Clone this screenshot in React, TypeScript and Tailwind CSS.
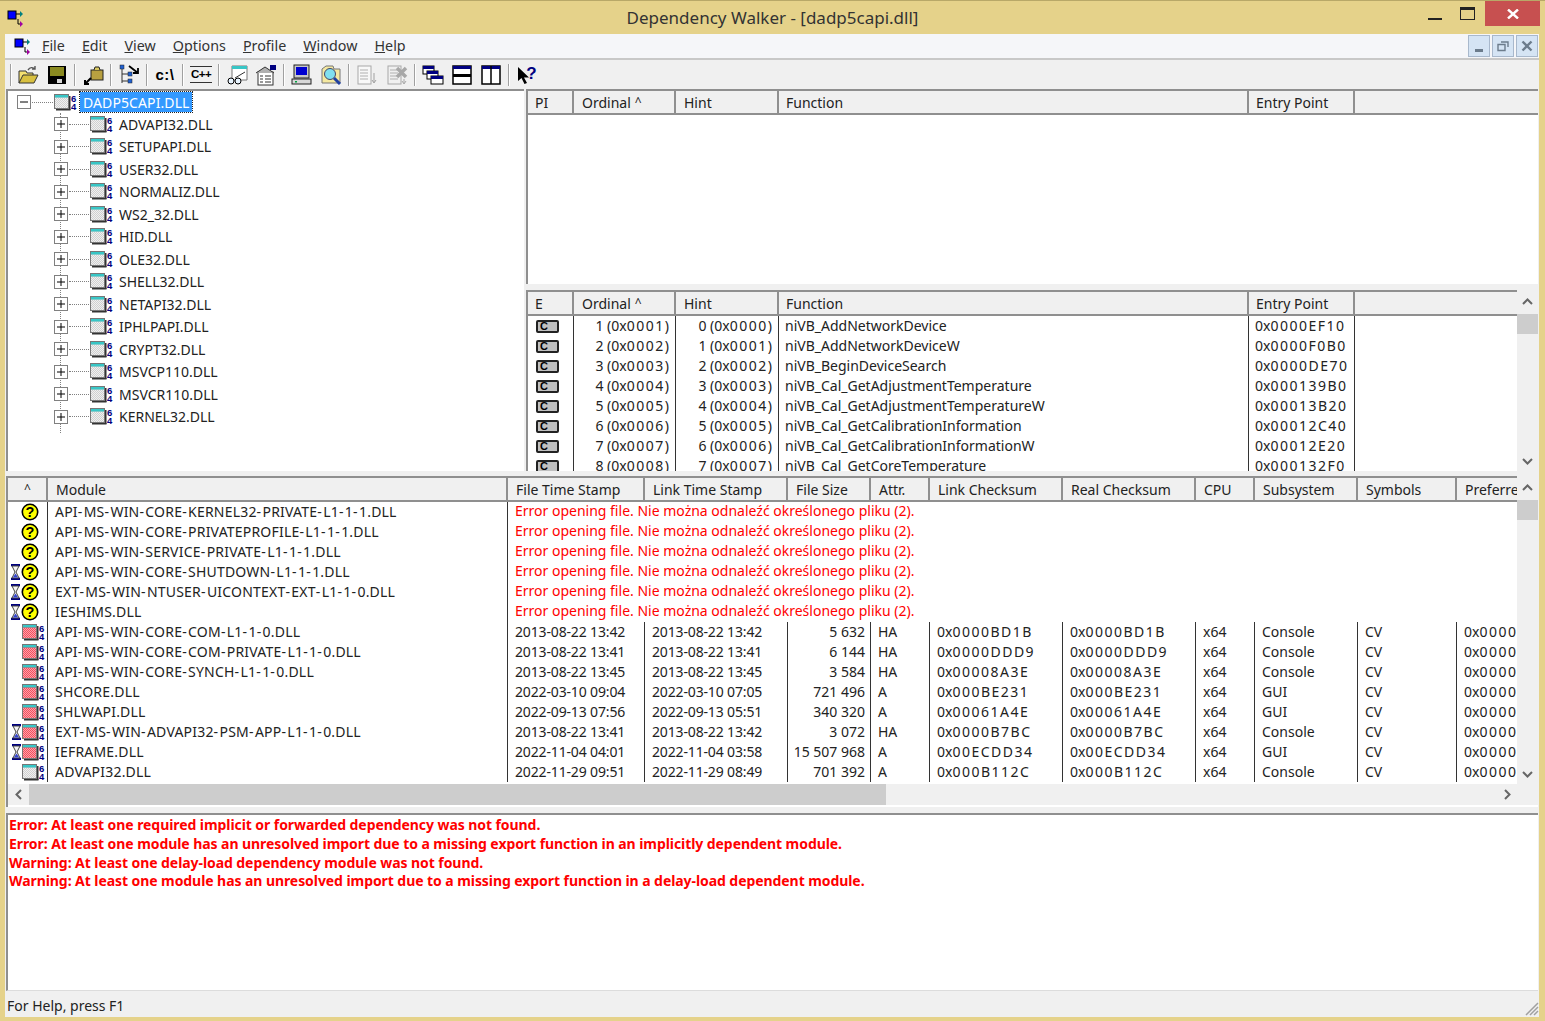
const FONT = "font-['Noto_Sans',sans-serif]";

function Hex({ v }: { v: string }) {
  return (
    <span>
      0x<span className="tracking-[1.5px]">{v}</span>
    </span>
  );
}

// the hyphens in the reference font run wider than in Noto Sans
function Name({ n }: { n: string }) {
  const parts = n.split('-');
  return (
    <span className="tracking-[0.2px]">
      {parts.map((p, i) => (
        <span key={i}>
          {p}
          {i < parts.length - 1 && <span className="tracking-[1.4px]">-</span>}
        </span>
      ))}
    </span>
  );
}

// dither dots for the module icon body
let DOTS = '';
for (let y = 4; y < 14; y++) {
  for (let x = 1 + (y % 2); x < 14; x += 2) {
    DOTS += `M${x} ${y}h1v1h-1z`;
  }
}

function DllIcon({ red }: { red?: boolean }) {
  return (
    <svg width="23" height="17" viewBox="0 0 23 17" className="shrink-0">
      <rect x="0.5" y="0.5" width="14" height="14" fill={red ? '#f2505e' : '#d0d0d0'} stroke="#777" />
      <path d={DOTS} fill={red ? '#ffa0a8' : '#f0f0f0'} />
      <rect x="15" y="2" width="1.5" height="14" fill="#333" />
      <rect x="2" y="15" width="14.5" height="1.5" fill="#333" />
      <rect x="1" y="1" width="13" height="2.5" fill="#38c6c6" />
      <text x="17" y="7.5" fontSize="9.5" fontWeight="700" fill="#000080" fontFamily="Liberation Sans">6</text>
      <text x="17" y="15.5" fontSize="9.5" fontWeight="700" fill="#000080" fontFamily="Liberation Sans">4</text>
    </svg>
  );
}

function Question() {
  return (
    <svg width="18" height="18" viewBox="0 0 18 18" className="shrink-0">
      <circle cx="9" cy="9" r="7.7" fill="#ffff00" stroke="#000" strokeWidth="1.6" />
      <text x="9" y="14" textAnchor="middle" fontSize="14.5" fontWeight="700" fontFamily="Liberation Sans" fill="#000">?</text>
    </svg>
  );
}

function Hourglass() {
  return (
    <svg width="11" height="16" viewBox="0 0 11 16" className="shrink-0">
      <path d="M1 1.2h9M1 14.8h9" stroke="#000080" strokeWidth="2.2" />
      <path d="M2 2 L9 2 L6 8 L9 14 L2 14 L5 8 Z" fill="#f4f4f4" stroke="#444" />
      <path d="M2.8 13.5 L8.2 13.5 L5.5 9.5 Z" fill="#3344cc" />
    </svg>
  );
}

function Expander({ minus }: { minus?: boolean }) {
  return (
    <svg width="14" height="14" viewBox="0 0 14 14" className="shrink-0">
      <rect x="0.5" y="0.5" width="13" height="13" fill="#fff" stroke="#808080" />
      <path d="M3 7h8" stroke="#000" />
      {!minus && <path d="M7 3v8" stroke="#000" />}
    </svg>
  );
}

function Tb({ children }: { children: React.ReactNode }) {
  return (
    <svg width="22" height="22" viewBox="0 0 22 22" className="shrink-0">
      {children}
    </svg>
  );
}

function Sep() {
  return <div className="h-[22px] w-[2px] mx-[6px] shrink-0 border-l border-[#a0a0a0] border-r border-r-white" />;
}

function AppLogo() {
  return (
    <svg width="18" height="18" viewBox="0 0 18 18" className="shrink-0">
      <rect x="1" y="2" width="8" height="8" fill="#0000ff" stroke="#000" />
      <path d="M9 5h5M11 10v5h3" stroke="#000" fill="none" />
      <path d="M13 2l3 3-3 3z" fill="#008080" />
      <path d="M13 12l3 3-3 3z" fill="#a000a0" />
    </svg>
  );
}

const TOOLBAR = (
  <div className="h-[29px] bg-[#f0f0f0] flex items-center pl-[5px] shrink-0">
    <div className="h-[22px] w-[2px] mr-[5px] border-l border-[#a0a0a0] border-r border-r-white" />
    <Tb>
      <path d="M2 19V7h7l1 2h6v3" fill="#f4e070" stroke="#333" />
      <path d="M2 19l4-8h15l-4 8z" fill="#d8c040" stroke="#333" />
      <path d="M11 6c2-3 5-3 7-1M18 2v3h-3" stroke="#555" fill="none" strokeWidth="1.4" />
    </Tb>
    <div className="w-[7px]" />
    <Tb>
      <rect x="2" y="2" width="18" height="18" fill="#000" />
      <rect x="4" y="3" width="14" height="9" fill="#8a8a20" />
      <rect x="6" y="14" width="11" height="6" fill="#000" />
      <rect x="11" y="15" width="5" height="4" fill="#d8d8d8" />
    </Tb>
    <Sep />
    <Tb>
      <rect x="9" y="6" width="12" height="10" fill="#b8a040" stroke="#222" />
      <path d="M12 6l1-3h4l1 3" fill="#d8c860" stroke="#222" />
      <path d="M9 14l-6 6M3 16v4h4" stroke="#000" strokeWidth="2" fill="none" />
    </Tb>
    <Sep />
    <Tb>
      <path d="M4 3v16M4 10h7M4 17h7" stroke="#333" fill="none" />
      <rect x="2" y="1" width="4" height="4" fill="#2060d0" stroke="#222" strokeWidth="0.5" />
      <rect x="10" y="8" width="4" height="4" fill="#2060d0" stroke="#222" strokeWidth="0.5" />
      <rect x="10" y="15" width="4" height="4" fill="#2060d0" stroke="#222" strokeWidth="0.5" />
      <path d="M11 2l9 7M20 4v5h-5" stroke="#000" strokeWidth="1.8" fill="none" />
    </Tb>
    <Sep />
    <span className="w-[22px] text-center text-[15px] font-bold text-black font-['Liberation_Sans',sans-serif] leading-none tracking-[0.5px]">c:\</span>
    <Sep />
    <div className="w-[22px] h-[17px] flex items-center justify-center border-y border-[#333]">
      <span className="text-[11.5px] font-bold leading-none text-black font-['Liberation_Sans',sans-serif] tracking-[-0.5px]">C++</span>
    </div>
    <Sep />
    <Tb>
      <path d="M6 2h15v14H6z" fill="#fff" stroke="#777" />
      <path d="M6 2h15v3H6z" fill="#38c6c6" />
      <path d="M9 14l10-6" stroke="#333" />
      <circle cx="5" cy="17" r="3" fill="#e8f4ff" stroke="#000" />
      <circle cx="12" cy="17" r="3" fill="#e8f4ff" stroke="#000" />
    </Tb>
    <div className="w-[7px]" />
    <Tb>
      <rect x="3" y="8" width="15" height="13" fill="#fff" stroke="#333" />
      <path d="M1 9l9-6 9 6" fill="#b0b0b0" stroke="#333" />
      <path d="M5 12h3M10 12h6M5 15h3M10 15h6M5 18h3M10 18h6" stroke="#333" />
      <path d="M15 1h6v5h-6z" fill="#000080" />
    </Tb>
    <Sep />
    <Tb>
      <rect x="3" y="1" width="15" height="13" fill="#c8c8c8" stroke="#222" />
      <rect x="5" y="3" width="11" height="8" fill="#0000d0" />
      <rect x="1" y="15" width="19" height="5" fill="#d8d8d8" stroke="#222" />
      <rect x="4" y="17" width="2" height="1.5" fill="#00a040" />
    </Tb>
    <div className="w-[7px]" />
    <Tb>
      <path d="M2 5l4-3h7l1 3h6v14H2z" fill="#f4e8a0" stroke="#777" />
      <circle cx="10" cy="10" r="5.5" fill="#80e0f0" stroke="#446" />
      <path d="M14 14l6 6" stroke="#2040a0" strokeWidth="3" />
    </Tb>
    <Sep />
    <Tb>
      <rect x="2" y="2" width="13" height="18" fill="#f8f8f8" stroke="#a8a8a8" />
      <path d="M4 6h8M4 9h8M4 12h8M4 15h8" stroke="#b0b0b0" />
      <path d="M18 9v9M16 16l2 3 2-3" stroke="#a0a0a0" fill="none" />
    </Tb>
    <div className="w-[8px]" />
    <Tb>
      <rect x="2" y="2" width="13" height="18" fill="#f0f0f0" stroke="#a8a8a8" />
      <path d="M4 6h8M4 9h8M4 12h8M4 15h8" stroke="#b0b0b0" />
      <path d="M11 4l9 9M20 4l-9 9" stroke="#a8a8a8" strokeWidth="3.5" />
      <path d="M18 15v4M16 17l2 3 2-3" stroke="#a8a8a8" fill="none" />
    </Tb>
    <Sep />
    <Tb>
      <rect x="1" y="2" width="11" height="8" fill="#fff" stroke="#000" />
      <rect x="1" y="2" width="11" height="3" fill="#000080" />
      <rect x="5" y="7" width="11" height="8" fill="#fff" stroke="#000" />
      <rect x="5" y="7" width="11" height="3" fill="#000080" />
      <rect x="9" y="12" width="12" height="8" fill="#fff" stroke="#000" />
      <rect x="9" y="12" width="12" height="3" fill="#000080" />
    </Tb>
    <div className="w-[7px]" />
    <Tb>
      <rect x="2" y="2" width="18" height="18" fill="#fff" stroke="#000" strokeWidth="1.5" />
      <rect x="2" y="2" width="18" height="3" fill="#000080" />
      <rect x="2" y="10" width="18" height="3" fill="#000" />
    </Tb>
    <div className="w-[7px]" />
    <Tb>
      <rect x="2" y="2" width="18" height="18" fill="#fff" stroke="#000" strokeWidth="1.5" />
      <rect x="2" y="2" width="18" height="3" fill="#000080" />
      <path d="M11 2v18" stroke="#000" strokeWidth="1.5" />
    </Tb>
    <Sep />
    <Tb>
      <path d="M2 3v14l3.5-3 3 6 2.5-1-3-5.5h5z" fill="#000" />
      <text x="15.5" y="15" textAnchor="middle" fontSize="17" fontWeight="700" fill="#000080" fontFamily="Liberation Sans">?</text>
    </Tb>
  </div>
);

const TREE = ['ADVAPI32.DLL', 'SETUPAPI.DLL', 'USER32.DLL', 'NORMALIZ.DLL', 'WS2_32.DLL', 'HID.DLL', 'OLE32.DLL', 'SHELL32.DLL', 'NETAPI32.DLL', 'IPHLPAPI.DLL', 'CRYPT32.DLL', 'MSVCP110.DLL', 'MSVCR110.DLL', 'KERNEL32.DLL'];

function Th({ w, children, border = true }: { w: number | string; children?: React.ReactNode; border?: boolean }) {
  return (
    <div
      className={'shrink-0 h-full pl-[8px] flex items-center whitespace-nowrap overflow-hidden text-[14px] text-[#222] bg-[#f0f0f0] ' + (border ? 'border-r-2 border-r-[#8f8f8f]' : 'grow')}
      style={{ width: w }}
    >
      {children}
    </div>
  );
}

function HeaderRow({ children }: { children: React.ReactNode }) {
  return <div className="h-[26px] flex shrink-0 border-y-2 border-y-[#8f8f8f] bg-[#f0f0f0]">{children}</div>;
}

function Up() {
  return <span className="ml-[4px] text-[12px] leading-none">^</span>;
}

function RightHeader({ first }: { first: string }) {
  return (
    <HeaderRow>
      <Th w={46}><span className="-ml-px">{first}</span></Th>
      <Th w={102}>Ordinal<Up /></Th>
      <Th w={103}>Hint</Th>
      <Th w={470}><span className="-ml-px">Function</span></Th>
      <Th w={106}><span className="-ml-px">Entry Point</span></Th>
      <Th w="auto" border={false} />
    </HeaderRow>
  );
}

const EXPORTS = [
  ['1', '0001', '0', '0000', 'niVB_AddNetworkDevice', '0000EF10'],
  ['2', '0002', '1', '0001', 'niVB_AddNetworkDeviceW', '0000F0B0'],
  ['3', '0003', '2', '0002', 'niVB_BeginDeviceSearch', '0000DE70'],
  ['4', '0004', '3', '0003', 'niVB_Cal_GetAdjustmentTemperature', '000139B0'],
  ['5', '0005', '4', '0004', 'niVB_Cal_GetAdjustmentTemperatureW', '00013B20'],
  ['6', '0006', '5', '0005', 'niVB_Cal_GetCalibrationInformation', '00012C40'],
  ['7', '0007', '6', '0006', 'niVB_Cal_GetCalibrationInformationW', '00012E20'],
  ['8', '0008', '7', '0007', 'niVB_Cal_GetCoreTemperature', '000132F0'],
];

const ERR = 'Error opening file. Nie można odnaleźć określonego pliku (2).';
const MISSING = [
  ['API-MS-WIN-CORE-KERNEL32-PRIVATE-L1-1-1.DLL', false],
  ['API-MS-WIN-CORE-PRIVATEPROFILE-L1-1-1.DLL', false],
  ['API-MS-WIN-SERVICE-PRIVATE-L1-1-1.DLL', false],
  ['API-MS-WIN-CORE-SHUTDOWN-L1-1-1.DLL', true],
  ['EXT-MS-WIN-NTUSER-UICONTEXT-EXT-L1-1-0.DLL', true],
  ['IESHIMS.DLL', true],
] as const;

const MODULES = [
  { n: 'API-MS-WIN-CORE-COM-L1-1-0.DLL', red: true, a: '2013-08-22 13:42', b: '2013-08-22 13:42', s: '5 632', at: 'HA', c: '0000BD1B', sub: 'Console' },
  { n: 'API-MS-WIN-CORE-COM-PRIVATE-L1-1-0.DLL', red: true, a: '2013-08-22 13:41', b: '2013-08-22 13:41', s: '6 144', at: 'HA', c: '0000DDD9', sub: 'Console' },
  { n: 'API-MS-WIN-CORE-SYNCH-L1-1-0.DLL', red: true, a: '2013-08-22 13:45', b: '2013-08-22 13:45', s: '3 584', at: 'HA', c: '00008A3E', sub: 'Console' },
  { n: 'SHCORE.DLL', red: true, a: '2022-03-10 09:04', b: '2022-03-10 07:05', s: '721 496', at: 'A', c: '000BE231', sub: 'GUI' },
  { n: 'SHLWAPI.DLL', red: true, a: '2022-09-13 07:56', b: '2022-09-13 05:51', s: '340 320', at: 'A', c: '00061A4E', sub: 'GUI' },
  { n: 'EXT-MS-WIN-ADVAPI32-PSM-APP-L1-1-0.DLL', red: true, hg: true, a: '2013-08-22 13:41', b: '2013-08-22 13:42', s: '3 072', at: 'HA', c: '0000B7BC', sub: 'Console' },
  { n: 'IEFRAME.DLL', red: true, hg: true, a: '2022-11-04 04:01', b: '2022-11-04 03:58', s: '15 507 968', at: 'A', c: '00ECDD34', sub: 'GUI' },
  { n: 'ADVAPI32.DLL', a: '2022-11-29 09:51', b: '2022-11-29 08:49', s: '701 392', at: 'A', c: '000B112C', sub: 'Console' },
];

const COLS = [40, 460, 137, 143, 83, 59, 133, 133, 59, 103, 99, 59];
const V = 'border-r border-r-[#333] h-full shrink-0 overflow-hidden whitespace-nowrap';

function Chevron({ d }: { d: string }) {
  return (
    <svg width="11" height="8" viewBox="0 0 11 8">
      <path d={d} stroke="#666" strokeWidth="2" fill="none" />
    </svg>
  );
}

function VScroll() {
  return (
    <div className="w-[21px] shrink-0 bg-[#f0f0f0] flex flex-col items-center">
      <div className="h-[24px] flex items-center"><Chevron d="M1 6l4.5-4.5L10 6" /></div>
      <div className="w-full bg-[#cdcdcd] h-[20px]" />
      <div className="grow" />
      <div className="h-[21px] flex items-center"><Chevron d="M1 2l4.5 4.5L10 2" /></div>
    </div>
  );
}

export default function App() {
  return (
    <div className={'w-[1545px] h-[1021px] overflow-hidden bg-[#e5d28a] flex flex-col text-[14px] text-[#222] ' + FONT}>
      <div className="h-[34px] shrink-0 flex items-center pl-[7px] border-t border-t-[#b8a868]">
        <AppLogo />
        <div className="grow text-center text-[17px] text-[#333] ml-[105px]">Dependency Walker - [dadp5capi.dll]</div>
        <div className="flex items-start self-start h-[26px] pr-[5px]">
          <div className="w-[40px] h-[26px] flex justify-center items-end pb-[7px]"><div className="w-[14px] h-[2px] bg-[#222]" /></div>
          <div className="w-[24px] h-[26px] flex justify-center pt-[6px]"><div className="w-[15px] h-[13px] border border-[#222] border-t-[3px]" /></div>
          <div className="w-[6px]" />
          <div className="w-[55px] h-[25px] bg-[#c75050] flex items-center justify-center">
            <svg width="12" height="10" viewBox="0 0 12 10"><path d="M1 0.5l10 9M11 0.5l-10 9" stroke="#fff" strokeWidth="2.4" /></svg>
          </div>
        </div>
      </div>

      <div className="mx-[5px] mr-[6px] grow min-h-0 flex flex-col bg-[#f0f0f0]">
        <div className="h-[26px] shrink-0 bg-[#f5f6f9] flex items-center pl-[9px] border-b-2 border-b-[#c8c8c8]">
          <AppLogo />
          <div className="flex ml-[10px] text-[14.3px] text-[#333] gap-[17px]">
            <span><u>F</u>ile</span>
            <span><u>E</u>dit</span>
            <span><u>V</u>iew</span>
            <span><u>O</u>ptions</span>
            <span><u>P</u>rofile</span>
            <span><u>W</u>indow</span>
            <span><u>H</u>elp</span>
          </div>
          <div className="ml-auto flex gap-[2px] pr-[1px]">
            <div className="w-[22px] h-[22px] bg-[#d5e4f4] border border-[#a8b8cc] flex items-end justify-center pb-[4px]"><div className="w-[8px] h-[3px] bg-[#6c7c8c]" /></div>
            <div className="w-[22px] h-[22px] bg-[#d5e4f4] border border-[#a8b8cc] flex items-center justify-center">
              <svg width="12" height="12" viewBox="0 0 12 12"><path d="M4 2h7v5M1 4.5h7v6H1z" stroke="#6c7c8c" strokeWidth="1.4" fill="none" /></svg>
            </div>
            <div className="w-[22px] h-[22px] bg-[#d5e4f4] border border-[#a8b8cc] flex items-center justify-center">
              <svg width="12" height="12" viewBox="0 0 12 12"><path d="M1.5 1.5l9 9M10.5 1.5l-9 9" stroke="#6c7c8c" strokeWidth="2.4" /></svg>
            </div>
          </div>
        </div>

        {TOOLBAR}

        <div className="h-[382px] shrink-0 flex pl-[1px] pr-[1px]">
          <div className="w-[518px] shrink-0 bg-white border-t-2 border-t-[#8f8f8f] border-l-2 border-l-[#8f8f8f] overflow-hidden">
            <div className="h-[22px] flex items-center pl-[9px]">
              <Expander minus />
              <span className="w-[21px] border-t border-dotted border-[#808080] ml-[1px] mr-[1px]" />
              <DllIcon />
              <span className="ml-[3px] h-[20px] pl-[3px] pr-[2px] bg-[#3399ff] text-white tracking-[0.1px] outline-1 outline-dotted outline-[#222] flex items-center">DADP5CAPI.DLL</span>
            </div>
            <div className="ml-[52px] border-l border-dotted border-[#808080] h-[320px]">
              {TREE.map((t) => (
                <div key={t} className="h-[22.5px] flex items-center -ml-[7px]">
                  <Expander />
                  <span className="w-[20px] border-t border-dotted border-[#808080] ml-[1px] mr-[1px]" />
                  <DllIcon />
                  <span className="ml-[6px] whitespace-nowrap">{t}</span>
                </div>
              ))}
            </div>
          </div>
          <div className="w-[2px] shrink-0" />
          <div className="grow min-w-0 flex flex-col">
            <div className="h-[195px] shrink-0 flex flex-col bg-white border-l-2 border-l-[#8f8f8f]">
              <RightHeader first="PI" />
            </div>
            <div className="h-[6px] shrink-0" />
            <div className="grow min-h-0 flex bg-white border-l-2 border-l-[#8f8f8f]">
              <div className="grow min-w-0 flex flex-col overflow-hidden">
                <RightHeader first="E" />
                <div className="grow min-h-0 overflow-hidden flex flex-col">
                  {EXPORTS.map((r) => (
                    <div key={r[0]} className="h-[20px] shrink-0 flex leading-[20px]">
                      <div className={V + ' w-[46px] flex items-center pl-[8px]'}>
                        <div className="w-[23px] h-[13px] bg-[#c0c0c0] border-2 border-[#222] rounded-[2px] text-[11px] font-bold leading-[9px] pl-[2px] font-['Liberation_Sans',sans-serif] text-black">C</div>
                      </div>
                      <div className={V + ' w-[102px] text-right pr-[6px]'}>{r[0]} (<Hex v={r[1]} />)</div>
                      <div className={V + ' w-[103px] text-right pr-[6px]'}>{r[2]} (<Hex v={r[3]} />)</div>
                      <div className={V + ' w-[470px] pl-[6px]'}>{r[4]}</div>
                      <div className={V + ' w-[106px] pl-[6px]'}><Hex v={r[5]} /></div>
                    </div>
                  ))}
                </div>
              </div>
              <VScroll />
            </div>
          </div>
        </div>

        <div className="h-[5px] shrink-0" />

        <div className="h-[331px] shrink-0 flex flex-col ml-[1px] mr-[1px] bg-white border-l-2 border-l-[#8f8f8f]">
          <div className="h-[308px] shrink-0 flex overflow-hidden">
            <div className="grow min-w-0 flex flex-col overflow-hidden">
              <HeaderRow>
                <Th w={COLS[0]}><span className="text-[12px] pl-[8px]">^</span></Th>
                <Th w={COLS[1]}>Module</Th>
                <Th w={COLS[2]}>File Time Stamp</Th>
                <Th w={COLS[3]}>Link Time Stamp</Th>
                <Th w={COLS[4]}>File Size</Th>
                <Th w={COLS[5]}>Attr.</Th>
                <Th w={COLS[6]}>Link Checksum</Th>
                <Th w={COLS[7]}>Real Checksum</Th>
                <Th w={COLS[8]}>CPU</Th>
                <Th w={COLS[9]}>Subsystem</Th>
                <Th w={COLS[10]}>Symbols</Th>
                <Th w={COLS[11]} border={false}>Preferred</Th>
              </HeaderRow>
              {MISSING.map(([n, hg]) => (
                <div key={n} className="h-[20px] shrink-0 flex leading-[20px]">
                  <div className={V + ' flex items-center justify-end pr-[8px]'} style={{ width: COLS[0] }}>
                    {hg && <Hourglass />}
                    <Question />
                  </div>
                  <div className={V + ' pl-[7px]'} style={{ width: COLS[1] }}><Name n={n} /></div>
                  <div className="pl-[7px] text-[#ff0000] whitespace-nowrap -translate-y-px">{ERR}</div>
                </div>
              ))}
              {MODULES.map((m) => (
                <div key={m.n} className="h-[20px] shrink-0 flex leading-[20px]">
                  <div className={V + ' flex items-center justify-end pr-[2px]'} style={{ width: COLS[0] }}>
                    {m.hg && <Hourglass />}
                    <DllIcon red={m.red} />
                  </div>
                  <div className={V + ' pl-[7px]'} style={{ width: COLS[1] }}><Name n={m.n} /></div>
                  <div className={V + ' pl-[7px] tracking-[-0.15px]'} style={{ width: COLS[2] }}>{m.a}</div>
                  <div className={V + ' pl-[7px] tracking-[-0.15px]'} style={{ width: COLS[3] }}>{m.b}</div>
                  <div className={V + ' text-right pr-[5px]'} style={{ width: COLS[4] }}>{m.s}</div>
                  <div className={V + ' pl-[7px]'} style={{ width: COLS[5] }}>{m.at}</div>
                  <div className={V + ' pl-[7px]'} style={{ width: COLS[6] }}><Hex v={m.c} /></div>
                  <div className={V + ' pl-[7px]'} style={{ width: COLS[7] }}><Hex v={m.c} /></div>
                  <div className={V + ' pl-[7px]'} style={{ width: COLS[8] }}>x64</div>
                  <div className={V + ' pl-[7px]'} style={{ width: COLS[9] }}>{m.sub}</div>
                  <div className={V + ' pl-[7px]'} style={{ width: COLS[10] }}>CV</div>
                  <div className="pl-[7px] w-[59px] overflow-hidden whitespace-nowrap shrink-0"><Hex v="00000000" /></div>
                </div>
              ))}
            </div>
            <VScroll />
          </div>
          <div className="h-[21px] shrink-0 bg-[#f0f0f0] flex items-center">
            <div className="w-[21px] flex justify-center">
              <svg width="8" height="11" viewBox="0 0 8 11"><path d="M6 1L1.5 5.5 6 10" stroke="#666" strokeWidth="2" fill="none" /></svg>
            </div>
            <div className="w-[857px] h-[21px] bg-[#cdcdcd]" />
            <div className="grow" />
            <div className="w-[21px] mr-[21px] flex justify-center">
              <svg width="8" height="11" viewBox="0 0 8 11"><path d="M2 1l4.5 4.5L2 10" stroke="#666" strokeWidth="2" fill="none" /></svg>
            </div>
          </div>
        </div>

        <div className="h-[6px] shrink-0" />

        <div className="grow min-h-0 mx-[1px] bg-white border-t-2 border-t-[#8f8f8f] border-l-2 border-l-[#8f8f8f] pl-[1px] pt-[1px] text-[#ff0000] font-bold text-[14px] tracking-[-0.07px] leading-[18.75px] border-b border-b-[#dcdcdc]">
          <div>Error: At least one required implicit or forwarded dependency was not found.</div>
          <div>Error: At least one module has an unresolved import due to a missing export function in an implicitly dependent module.</div>
          <div>Warning: At least one delay-load dependency module was not found.</div>
          <div>Warning: At least one module has an unresolved import due to a missing export function in a delay-load dependent module.</div>
        </div>

        <div className="h-[26px] shrink-0 flex items-center pl-[2px] pt-[3px] relative bg-[#f0f0f0]">
          For Help, press F1
          <svg width="14" height="14" viewBox="0 0 14 14" className="absolute right-0 bottom-[1px]">
            <path d="M13 1L1 13M13 5L5 13M13 9L9 13" stroke="#a0a0a0" strokeWidth="1.5" />
          </svg>
        </div>
      </div>
      <div className="h-[4px] shrink-0" />
    </div>
  );
}
